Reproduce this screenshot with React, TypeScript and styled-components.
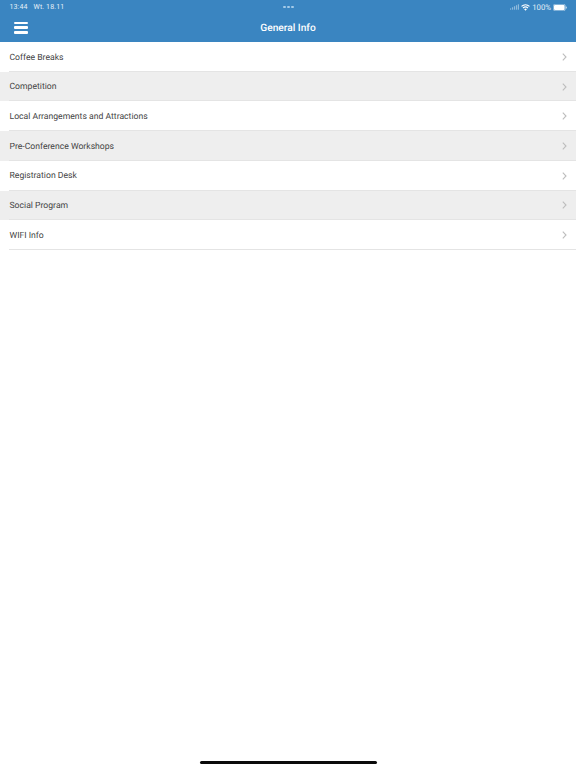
import React from "react";
import styled, { createGlobalStyle } from "styled-components";

const Global = createGlobalStyle`
  html, body { margin: 0; padding: 0; background: #fff; }
  body {
    font-family: Roboto, "Liberation Sans", Arial, sans-serif;
    text-rendering: geometricPrecision;
  }
`;

const Page = styled.div`
  position: relative;
  width: 576px;
  height: 768px;
  overflow: hidden;
  background: #fff;
  display: flex;
  flex-direction: column;
`;

const Header = styled.header`
  height: 42px;
  background: #3a85c1;
  color: #fff;
  display: flex;
  flex-direction: column;
  box-sizing: border-box;
`;

const StatusBar = styled.div`
  height: 14px;
  padding: 0 9px 0 9.5px;
  display: grid;
  grid-template-columns: 1fr auto 1fr;
  align-items: center;
  font-size: 7px;
  color: #e6f0f8;
`;

const StatusLeft = styled.div`
  display: flex;
  gap: 6px;
  letter-spacing: 0.12px;
`;

const Dots = styled.div`
  display: flex;
  gap: 1.5px;
`;

const Dot = styled.span`
  width: 2.5px;
  height: 2.5px;
  border-radius: 50%;
  background: #a5cbe8;
`;

const StatusRight = styled.div`
  display: flex;
  justify-content: flex-end;
  align-items: center;
  gap: 2px;
  font-size: 7.8px;
`;

const NavBar = styled.div`
  flex: 1;
  position: relative;
  display: flex;
  align-items: center;
  justify-content: center;
  padding-top: 1px;
`;

const Title = styled.h1`
  margin: 0;
  font-size: 10.2px;
  font-weight: 500;
  color: #fff;
`;

const MenuButton = styled.div`
  position: absolute;
  left: 14px;
  top: 7.5px;
  width: 14px;
  display: flex;
  flex-direction: column;
  gap: 2.6px;
`;

const MenuBar = styled.span`
  height: 2.4px;
  border-radius: 1px;
  background: #fff;
`;

const List = styled.ul`
  list-style: none;
  margin: 0;
  padding: 0;
`;

const Row = styled.li<{ $shaded: boolean }>`
  position: relative;
  height: 29.714px;
  box-sizing: border-box;
  padding: 0 9.5px;
  display: flex;
  align-items: center;
  justify-content: space-between;
  background: ${(p) => (p.$shaded ? "#eeeeee" : "#ffffff")};
  color: #444444;
  font-size: 8.65px;

  &::after {
    content: "";
    position: absolute;
    left: 9px;
    right: 0;
    bottom: 0;
    height: 1px;
    background: #e4e4e4;
  }
`;

const Label = styled.span`
  padding-top: 1.6px;
`;

const Chevron = styled.svg`
  width: 5px;
  height: 8px;
`;

const HomeIndicator = styled.div`
  position: absolute;
  left: 199.5px;
  bottom: 4.5px;
  width: 177px;
  height: 3px;
  border-radius: 1.5px;
  background: #0a0a0a;
`;

const items = [
  "Coffee Breaks",
  "Competition",
  "Local Arrangements and Attractions",
  "Pre-Conference Workshops",
  "Registration Desk",
  "Social Program",
  "WIFI Info",
];

export default function App() {
  return (
    <Page>
      <Global />
      <Header>
        <StatusBar>
          <StatusLeft>
            <span>13:44</span>
            <span>Wt. 18.11</span>
          </StatusLeft>
          <Dots>
            <Dot />
            <Dot />
            <Dot />
          </Dots>
          <StatusRight>
            <svg width="9" height="6" viewBox="0 0 10 6" fill="#8fbadc">
              <rect x="0" y="4.5" width="1.3" height="1.5" />
              <rect x="2.2" y="3.3" width="1.3" height="2.7" />
              <rect x="4.4" y="2.1" width="1.3" height="3.9" />
              <rect x="6.6" y="1" width="1.3" height="5" />
              <rect x="8.7" y="0" width="1.3" height="6" />
            </svg>
            <svg width="9" height="7" viewBox="0 0 18 14" fill="#fff">
              <path d="M9 13.5 6.3 10.4a4 4 0 0 1 5.4 0z" />
              <path d="M4.9 8.9 3.3 7.1a8.6 8.6 0 0 1 11.4 0l-1.6 1.8a6.2 6.2 0 0 0-8.2 0z" />
              <path d="M1.9 5.6.2 3.8a13 13 0 0 1 17.6 0l-1.7 1.8a10.6 10.6 0 0 0-14.2 0z" />
            </svg>
            <span>100%</span>
            <svg width="14" height="7" viewBox="0 0 14 7">
              <rect x="0.3" y="0.3" width="12" height="6.4" rx="1.6" fill="none" stroke="#cfe1f0" strokeWidth="0.6" />
              <rect x="1" y="1" width="10.6" height="5" rx="1" fill="#fff" />
              <rect x="12.8" y="2.4" width="1" height="2.2" rx="0.5" fill="#cfe1f0" />
            </svg>
          </StatusRight>
        </StatusBar>
        <NavBar>
          <MenuButton>
            <MenuBar />
            <MenuBar />
            <MenuBar />
          </MenuButton>
          <Title>General Info</Title>
        </NavBar>
      </Header>
      <List>
        {items.map((label, i) => (
          <Row key={label} $shaded={i % 2 === 1}>
            <Label>{label}</Label>
            <Chevron viewBox="0 0 5 8">
              <path d="M0.8 0.7 4 4 0.8 7.3" fill="none" stroke="#bdbdbd" strokeWidth="1.1" />
            </Chevron>
          </Row>
        ))}
      </List>
      <HomeIndicator />
    </Page>
  );
}
